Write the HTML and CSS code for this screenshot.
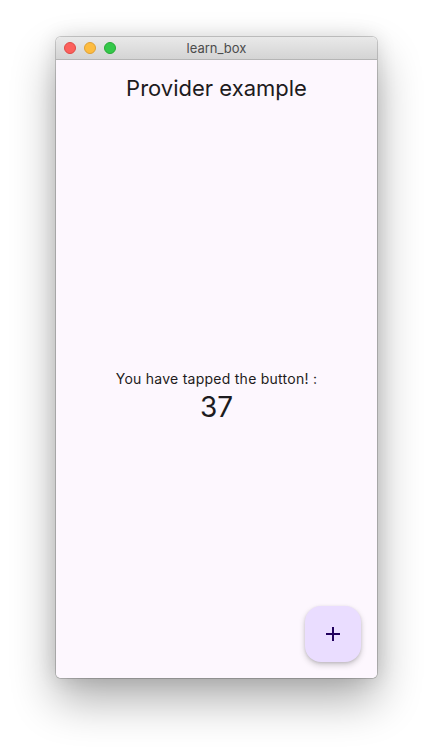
FILE: index.html
```html
<!DOCTYPE html>
<html lang="en">
<head>
<meta charset="utf-8">
<title>learn_box</title>
<link rel="stylesheet" href="styles.css">
</head>
<body>
<div class="window">
  <div class="titlebar">
    <div class="lights">
      <span class="light red"></span>
      <span class="light yellow"></span>
      <span class="light green"></span>
    </div>
    <div class="wtitle">learn_box</div>
  </div>
  <div class="app">
    <header class="appbar">Provider example</header>
    <main class="center">
      <div class="label">You have tapped the button! :</div>
      <div class="count">37</div>
    </main>
    <button class="fab" aria-label="Increment">
      <svg width="24" height="24" viewBox="0 0 24 24"><path d="M19 13h-6v6h-2v-6H5v-2h6V5h2v6h6v2z" fill="#21005D"/></svg>
    </button>
  </div>
</div>
</body>
</html>
```
FILE: styles.css
```css
html, body {
  margin: 0;
  padding: 0;
  background: #ffffff;
}
body {
  box-sizing: border-box;
  min-height: 752px;
  padding: 37px 0 74px 56px;
  font-family: Inter, "Noto Sans", sans-serif;
}
.window {
  width: 321px;
  height: 641px;
  box-sizing: border-box;
  border-radius: 5px;
  overflow: hidden;
  display: flex;
  flex-direction: column;
  box-shadow: 0 0 0 1px rgba(0,0,0,0.18), 0 22px 45px rgba(0,0,0,0.32), 0 0 20px rgba(0,0,0,0.12);
}
.titlebar {
  height: 22px;
  flex: none;
  position: relative;
  display: flex;
  align-items: center;
  justify-content: center;
  background: linear-gradient(#e9e9e9, #d4d4d4);
  border-bottom: 1px solid #b5b5b5;
}
.lights {
  position: absolute;
  left: 8px;
  top: 5px;
  display: flex;
  gap: 8px;
}
.light {
  width: 12px;
  height: 12px;
  border-radius: 50%;
  box-sizing: border-box;
}
.red { background: #fc605c; border: 0.5px solid #de4a45; }
.yellow { background: #fdbc40; border: 0.5px solid #dea035; }
.green { background: #34c84a; border: 0.5px solid #27aa35; }
.wtitle {
  font-size: 13px;
  color: #4c4c4c;
}
.app {
  flex: 1;
  position: relative;
  display: flex;
  flex-direction: column;
  background: #fdf7fe;
}
.appbar {
  height: 56px;
  flex: none;
  display: flex;
  align-items: center;
  justify-content: center;
  font-size: 22px;
  color: #1d1b20;
}
.center {
  flex: 1;
  display: flex;
  flex-direction: column;
  align-items: center;
  justify-content: center;
}
.label {
  font-size: 14px;
  line-height: 20px;
  letter-spacing: 0.25px;
  color: #1d1b20;
}
.count {
  font-size: 28px;
  line-height: 36px;
  color: #1d1b20;
}
.fab {
  position: absolute;
  right: 16px;
  bottom: 16px;
  width: 56px;
  height: 56px;
  border: none;
  padding: 0;
  border-radius: 16px;
  background: #eaddff;
  display: flex;
  align-items: center;
  justify-content: center;
  box-shadow: 0 3px 6px rgba(0,0,0,0.18), 0 1px 3px rgba(0,0,0,0.12);
}
```
